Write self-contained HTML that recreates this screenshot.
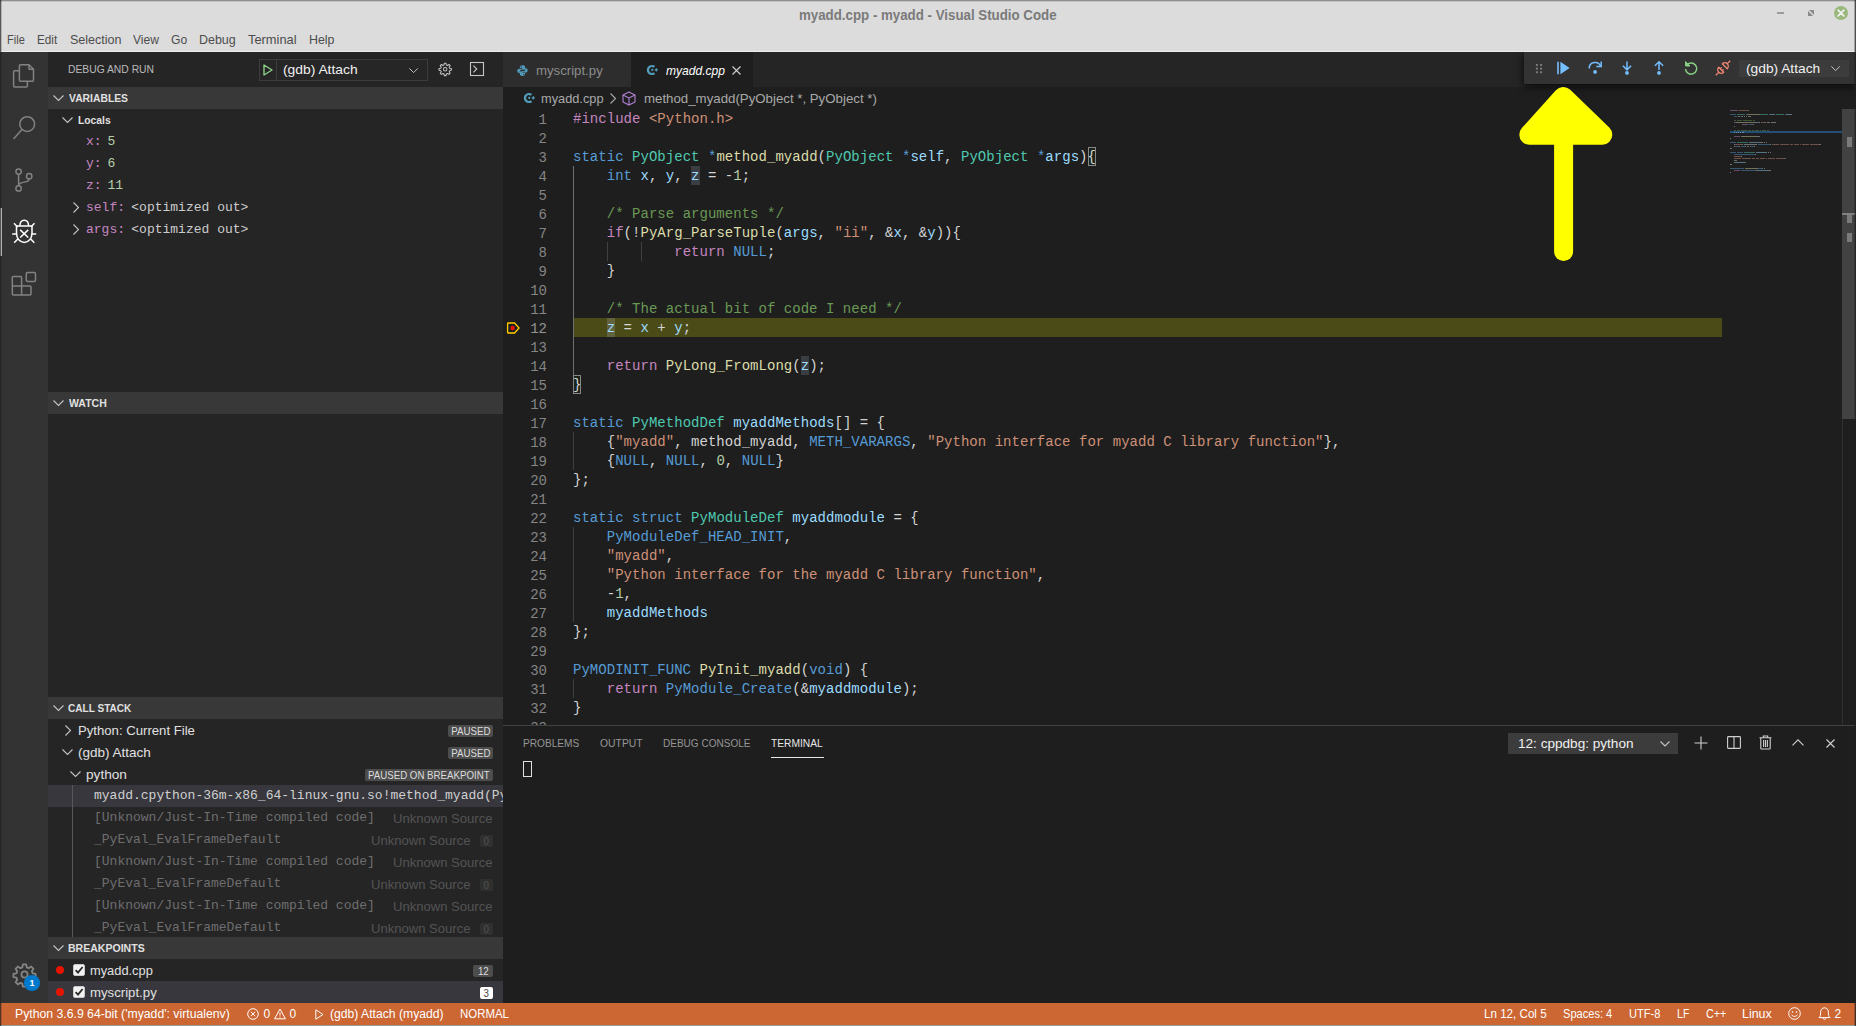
<!DOCTYPE html>
<html>
<head>
<meta charset="utf-8">
<title>myadd.cpp - myadd - Visual Studio Code</title>
<style>
*{box-sizing:border-box;margin:0;padding:0}
html,body{width:1856px;height:1026px;overflow:hidden;background:#1e1e1e}
body{position:relative;font-family:"Liberation Sans",sans-serif;font-size:13px;color:#cccccc}
.abs{position:absolute}
.t{position:absolute;white-space:pre;line-height:1}
svg{position:absolute;overflow:visible}
/* ---------- title + menu ---------- */
#titlebar{left:0;top:0;width:1856px;height:52px;background:#dcdcdc}
.tt{font-weight:bold;font-size:15.2px;color:#7a7a7a}
.menu{top:33.4px;font-size:13px;color:#4d4d4d}
/* ---------- activity bar ---------- */
#activity{left:0;top:52px;width:48px;height:951px;background:#333333}
/* ---------- sidebar ---------- */
#sidebar{left:48px;top:52px;width:455px;height:951px;background:#252526}
.hdr{left:48px;width:455px;height:22px;background:#383838}
.hdrt{font-size:11px;font-weight:bold;color:#e0e0e0;left:68px}
.mono{font-family:"Liberation Mono",monospace}

.chev{fill:none;stroke:#c5c5c5;stroke-width:1.1}
.row{font-size:13px;color:#e0e0e0}
.m13{font-family:"Liberation Mono",monospace;font-size:13px}
.badge{position:absolute;height:12px;border-radius:2px;background:#4d4d4d;color:#dcdcdc;font-size:11.3px;line-height:12.6px;white-space:pre;display:flex;justify-content:center}
.badge span{display:block;transform:scaleX(.86);transform-origin:50% 50%}
.dis{color:#6e6e6e}
.src{font-size:12px;color:#545454}
/* ---------- editor ---------- */
#tabs{left:503px;top:52px;width:1353px;height:35px;background:#252526}
#editor{left:503px;top:87px;width:1353px;height:638px;background:#1e1e1e}

.code{position:absolute;left:573px;white-space:pre;font-family:"Liberation Mono",monospace;font-size:14px;line-height:21px;height:19px;color:#d4d4d4;letter-spacing:0.031px}
.ln{position:absolute;left:503px;margin-top:2px;width:44px;text-align:right;white-space:pre;font-family:"Liberation Mono",monospace;font-size:14px;line-height:19px;height:19px;color:#858585}
.k{color:#569cd6}.c{color:#c586c0}.ty{color:#4ec9b0}.f{color:#dcdcaa}.v{color:#9cdcfe}.s{color:#ce9178}.n{color:#b5cea8}.cm{color:#6a9955}
.ig{position:absolute;width:1px;background:#404040}
.bm{display:inline-block;height:19px;vertical-align:top;outline:1px solid #888888;outline-offset:-1px;background:rgba(0,100,0,0.1)}
.wh{display:inline-block;height:19px;vertical-align:top;background:#3a3d41;color:#9cdcfe}
.whs{display:inline-block;height:19px;vertical-align:top;background:#62623c;color:#9cdcfe}
.bc{top:92px;font-size:13px;color:#a9a9a9}
.pt{top:738px;font-size:11px;color:#969696}
/* ---------- status ---------- */
#status{left:0;top:1003px;width:1856px;height:22px;background:#cc6633}
.st{top:1008px;font-size:12px;color:#ffffff}
</style>
</head>
<body>
<!-- TITLE BAR -->
<div id="titlebar" class="abs"></div>
<div class="abs" style="left:0;top:0;width:1856px;height:1px;background:#8e8e8e"></div>
<div class="abs" style="left:0;top:1px;width:1856px;height:1px;background:#c4c4c4"></div>
<div class="abs" style="left:0;top:51px;width:1856px;height:1px;background:#ececec"></div>
<div class="t tt" style="transform:scaleX(0.8755);transform-origin:0 0;margin-left:0.26px;left:798.5px;top:7px">myadd.cpp - myadd - Visual Studio Code</div>
<div class="t menu" style="transform:scaleX(0.8476);transform-origin:0 0;margin-left:-0.40px;left:7px">File</div>
<div class="t menu" style="transform:scaleX(0.9000);transform-origin:0 0;margin-left:0.40px;left:37px">Edit</div>
<div class="t menu" style="transform:scaleX(0.9642);transform-origin:0 0;margin-left:0.20px;left:70px">Selection</div>
<div class="t menu" style="transform:scaleX(0.9286);transform-origin:0 0;margin-left:0.00px;left:133px">View</div>
<div class="t menu" style="transform:scaleX(0.9294);transform-origin:0 0;margin-left:0.30px;left:171px">Go</div>
<div class="t menu" style="transform:scaleX(0.9579);transform-origin:0 0;margin-left:0.40px;left:199px">Debug</div>
<div class="t menu" style="transform:scaleX(0.9878);transform-origin:0 0;margin-left:0.20px;left:248px">Terminal</div>
<div class="t menu" style="transform:scaleX(0.9519);transform-origin:0 0;margin-left:0.30px;left:309px">Help</div>
<!-- window buttons -->
<div class="abs" style="left:1777px;top:12px;width:7px;height:2px;background:#9b9b9b"></div>
<svg style="left:1806px;top:8px" width="10" height="10" viewBox="0 0 10 10"><path d="M3 2 L8 2 L8 7 Z" fill="#8a8a8a"/><path d="M2 3 L2 8 L7 8 Z" fill="#8a8a8a"/></svg>
<div class="abs" style="left:1834px;top:6px;width:14px;height:14px;border-radius:7px;background:#9ab87c"></div>
<svg style="left:1834px;top:6px" width="14" height="14" viewBox="0 0 14 14"><path d="M4.2 4.2 L9.8 9.8 M9.8 4.2 L4.2 9.8" stroke="#f0f0f0" stroke-width="1.8" stroke-linecap="round"/></svg>

<!-- ACTIVITY BAR -->
<div id="activity" class="abs"></div>
<div class="abs" style="left:0;top:208px;width:2px;height:48px;background:#d8d8d8"></div>
<!-- explorer -->
<svg style="left:12px;top:64px" width="24" height="24" viewBox="0 0 24 24" fill="none" stroke="#828282" stroke-width="1.5" stroke-linejoin="round"><path d="M8.4 0.8 H17 L21.5 5.3 V16.3 a1 1 0 0 1 -1 1 H8.4 a1 1 0 0 1 -1 -1 V1.8 a1 1 0 0 1 1 -1 Z"/><path d="M17 0.8 V5.3 H21.5"/><path d="M7.4 6.7 H2.6 a1 1 0 0 0 -1 1 V22.1 a1 1 0 0 0 1 1 H14.4 a1 1 0 0 0 1 -1 V17.3"/></svg>
<!-- search -->
<svg style="left:12px;top:116px" width="24" height="24" viewBox="0 0 24 24" fill="none" stroke="#828282" stroke-width="1.5"><circle cx="15.2" cy="8.1" r="7.4"/><path d="M10 13.4 L1.5 23.1"/></svg>
<!-- scm -->
<svg style="left:12px;top:168px" width="24" height="24" viewBox="0 0 24 24" fill="none" stroke="#828282" stroke-width="1.5"><circle cx="6.6" cy="3.6" r="2.7"/><circle cx="6.6" cy="20.4" r="2.7"/><circle cx="17.2" cy="8.3" r="2.7"/><path d="M6.6 6.3 V17.7 M17.2 11 C17.2 15.6 6.6 12.6 6.6 17.7"/></svg>
<!-- debug -->
<svg style="left:12px;top:219px" width="24" height="26" viewBox="0 0 24 26" fill="none" stroke="#ffffff" stroke-width="1.5"><path d="M4.5 7 H20 V14 C20 19.6 16.5 23.5 12.25 23.5 C8 23.5 4.5 19.6 4.5 14 Z" stroke-linejoin="round"/><path d="M7.9 7 C7.9 3 9.6 1.2 12.25 1.2 C14.9 1.2 16.6 3 16.6 7"/><path d="M0.2 14.9 H4.5 M20 14.9 H24.2 M2 4.2 L5.6 8 M22.5 4.2 L18.9 8 M2.2 23.8 L6 19.8 M22.3 23.8 L18.5 19.8"/><path d="M8.2 10.9 L16.2 18.5 M16.2 10.9 L8.2 18.5"/></svg>
<!-- extensions -->
<svg style="left:12px;top:272px" width="24" height="24" viewBox="0 0 24 24" fill="none" stroke="#828282" stroke-width="1.5" stroke-linejoin="round"><path d="M1.3 4.6 H8.6 a1 1 0 0 1 1 1 V14 H18 a1 1 0 0 1 1 1 V22.1 a1 1 0 0 1 -1 1 H1.3 a1 1 0 0 1 -1 -1 V5.6 a1 1 0 0 1 1 -1 Z M0.3 14 H9.6 V23.1"/><rect x="14.3" y="0.5" width="9.2" height="9" rx="1.2"/></svg>
<!-- gear -->
<svg style="left:11.5px;top:962.4px" width="27" height="27" viewBox="0 0 28 28" fill="none" stroke="#848484" stroke-width="1.9" stroke-linejoin="round"><circle cx="13" cy="13" r="3.2"/><path d="M11.3 2.5 h3.4 l.6 3 l2 .9 l2.6 -1.7 l2.4 2.4 l-1.7 2.6 l.9 2 l3 .6 v3.4 l-3 .6 l-.9 2 l1.7 2.6 l-2.4 2.4 l-2.6 -1.7 l-2 .9 l-.6 3 h-3.4 l-.6 -3 l-2 -.9 l-2.6 1.7 l-2.4 -2.4 l1.7 -2.6 l-.9 -2 l-3 -.6 v-3.4 l3 -.6 l.9 -2 l-1.7 -2.6 l2.4 -2.4 l2.6 1.7 l2 -.9 Z"/></svg>
<div class="abs" style="left:24px;top:975px;width:16px;height:16px;border-radius:8px;background:#007acc"></div>
<div class="t" style="left:24px;top:979px;width:16px;text-align:center;font-size:9px;font-weight:bold;color:#fff">1</div>

<!-- SIDEBAR -->
<div id="sidebar" class="abs"></div>
<div class="t" style="transform:scaleX(0.9380);transform-origin:0 0;margin-left:0.30px;left:68px;top:64px;font-size:11px;color:#bbbbbb">DEBUG AND RUN</div>
<div class="abs" style="left:259px;top:59px;width:169px;height:22px;border:1px solid #3c3c3c;background:#262627"></div>
<div class="abs" style="left:276px;top:60px;width:1px;height:20px;background:#3c3c3c"></div>
<svg style="left:263px;top:64px" width="10" height="12" viewBox="0 0 10 12"><path d="M1 1 L9 6 L1 11 Z" fill="none" stroke="#89d185" stroke-width="1.4" stroke-linejoin="round"/></svg>
<div class="t" style="transform:scaleX(1.0643);transform-origin:0 0;margin-left:0.00px;left:283px;top:63px;font-size:13px;color:#f0f0f0">(gdb) Attach</div>
<svg style="left:408.9px;top:67.8px" width="9.2" height="5.2" viewBox="0 0 9.2 5.2"><path class="chev" style="stroke-width:1" d="M0.4 0.4 L4.6 4.6 L8.8 0.4"/></svg>
<svg style="left:437.8px;top:61.8px" width="14.4" height="14.4" viewBox="0 0 28 28" fill="none" stroke="#c5c5c5" stroke-width="2" stroke-linejoin="round"><circle cx="14" cy="14" r="3.4"/><path d="M12.3 2.5 h3.4 l.6 3.4 l2.2 .9 l2.8 -2 l2.4 2.4 l-2 2.8 l.9 2.2 l3.4 .6 v3.4 l-3.4 .6 l-.9 2.2 l2 2.8 l-2.4 2.4 l-2.8 -2 l-2.2 .9 l-.6 3.4 h-3.4 l-.6 -3.4 l-2.2 -.9 l-2.8 2 l-2.4 -2.4 l2 -2.8 l-.9 -2.2 l-3.4 -.6 v-3.4 l3.4 -.6 l.9 -2.2 l-2 -2.8 l2.4 -2.4 l2.8 2 l2.2 -.9 Z"/></svg>
<svg style="left:470px;top:62px" width="14" height="14" viewBox="0 0 14 14" fill="none" stroke="#c5c5c5" stroke-width="1.1"><rect x="0.5" y="0.5" width="13" height="13"/><path d="M3.4 3.6 L6.8 7 L3.4 10.4"/></svg>
<div class="abs hdr" style="top:87px"></div>
<svg style="left:52.5px;top:95px" width="11" height="6" viewBox="0 0 11 6"><path class="chev" d="M0.5 0.5 L5.5 5.5 L10.5 0.5"/></svg>
<div class="t hdrt" style="transform:scaleX(0.9406);transform-origin:0 0;margin-left:1.24px;top:93px">VARIABLES</div>
<div class="abs hdr" style="top:392px"></div>
<svg style="left:52.5px;top:400px" width="11" height="6" viewBox="0 0 11 6"><path class="chev" d="M0.5 0.5 L5.5 5.5 L10.5 0.5"/></svg>
<div class="t hdrt" style="transform:scaleX(0.9550);transform-origin:0 0;margin-left:1.25px;top:398px">WATCH</div>
<div class="abs hdr" style="top:697px"></div>
<svg style="left:52.5px;top:705px" width="11" height="6" viewBox="0 0 11 6"><path class="chev" d="M0.5 0.5 L5.5 5.5 L10.5 0.5"/></svg>
<div class="t hdrt" style="transform:scaleX(0.9143);transform-origin:0 0;margin-left:0.30px;top:703px">CALL STACK</div>
<div class="abs hdr" style="top:937px"></div>
<svg style="left:52.5px;top:945px" width="11" height="6" viewBox="0 0 11 6"><path class="chev" d="M0.5 0.5 L5.5 5.5 L10.5 0.5"/></svg>
<div class="t hdrt" style="transform:scaleX(0.9575);transform-origin:0 0;margin-left:0.40px;top:943px">BREAKPOINTS</div>
<svg style="left:62.0px;top:117px" width="11" height="6" viewBox="0 0 11 6"><path class="chev" d="M0.5 0.5 L5.5 5.5 L10.5 0.5"/></svg>
<div class="t" style="transform:scaleX(0.9371);transform-origin:0 0;margin-left:0.20px;left:78px;top:115px;font-size:11px;font-weight:bold;color:#e0e0e0">Locals</div>
<div class="t m13" style="left:86px;top:135px"><span style="color:#c586c0">x:</span><span style="color:#b5cea8;margin-left:5.8px">5</span></div>
<div class="t m13" style="left:86px;top:157px"><span style="color:#c586c0">y:</span><span style="color:#b5cea8;margin-left:5.8px">6</span></div>
<div class="t m13" style="left:86px;top:179px"><span style="color:#c586c0">z:</span><span style="color:#b5cea8;margin-left:5.8px">11</span></div>
<svg style="left:72.5px;top:201.5px" width="6" height="11" viewBox="0 0 6 11"><path class="chev" d="M0.5 0.5 L5.5 5.5 L0.5 10.5"/></svg>
<div class="t m13" style="left:86px;top:201px"><span style="color:#c586c0">self:</span><span style="color:#cccccc;margin-left:6.3px">&lt;optimized out&gt;</span></div>
<svg style="left:72.5px;top:223.5px" width="6" height="11" viewBox="0 0 6 11"><path class="chev" d="M0.5 0.5 L5.5 5.5 L0.5 10.5"/></svg>
<div class="t m13" style="left:86px;top:223px"><span style="color:#c586c0">args:</span><span style="color:#cccccc;margin-left:6.3px">&lt;optimized out&gt;</span></div>
<svg style="left:64.5px;top:724.5px" width="6" height="11" viewBox="0 0 6 11"><path class="chev" d="M0.5 0.5 L5.5 5.5 L0.5 10.5"/></svg>
<div class="t row" style="transform:scaleX(1.0112);transform-origin:0 0;margin-left:0.20px;left:78px;top:724px">Python: Current File</div>
<div class="badge" style="left:448px;top:725px;width:45px"><span>PAUSED</span></div>
<svg style="left:62.0px;top:749px" width="11" height="6" viewBox="0 0 11 6"><path class="chev" d="M0.5 0.5 L5.5 5.5 L10.5 0.5"/></svg>
<div class="t row" style="transform:scaleX(1.0386);transform-origin:0 0;margin-left:0.20px;left:78px;top:746px">(gdb) Attach</div>
<div class="badge" style="left:448px;top:747px;width:45px"><span>PAUSED</span></div>
<svg style="left:69.5px;top:771px" width="11" height="6" viewBox="0 0 11 6"><path class="chev" d="M0.5 0.5 L5.5 5.5 L10.5 0.5"/></svg>
<div class="t row" style="transform:scaleX(1.0487);transform-origin:0 0;margin-left:0.40px;left:86px;top:768px">python</div>
<div class="badge" style="left:365px;top:769px;width:128px"><span>PAUSED ON BREAKPOINT</span></div>
<div class="abs" style="left:48px;top:785px;width:455px;height:22px;background:#37373d"></div>
<div class="abs" style="left:72px;top:785px;width:1px;height:152px;background:#585858"></div>
<div class="abs" style="left:94px;top:785px;width:409px;height:22px;overflow:hidden"><div class="t m13" style="left:0;top:4px;color:#d0d0d0">myadd.cpython-36m-x86_64-linux-gnu.so!method_myadd(PyObject * self, PyObject * args)</div></div>
<div class="t m13 dis" style="left:94px;top:811px">[Unknown/Just-In-Time compiled code]</div>
<div class="t src" style="transform:scaleX(1.0889);transform-origin:0 0;margin-left:-1.09px;left:394px;top:813px">Unknown Source</div>
<div class="t m13 dis" style="left:94px;top:833px">_PyEval_EvalFrameDefault</div>
<div class="t src" style="transform:scaleX(1.0889);transform-origin:0 0;margin-left:-1.09px;left:372px;top:835px">Unknown Source</div>
<div class="badge" style="left:480px;top:835px;width:13px;background:#303030;color:#525252"><span>0</span></div>
<div class="t m13 dis" style="left:94px;top:855px">[Unknown/Just-In-Time compiled code]</div>
<div class="t src" style="transform:scaleX(1.0889);transform-origin:0 0;margin-left:-1.09px;left:394px;top:857px">Unknown Source</div>
<div class="t m13 dis" style="left:94px;top:877px">_PyEval_EvalFrameDefault</div>
<div class="t src" style="transform:scaleX(1.0889);transform-origin:0 0;margin-left:-1.09px;left:372px;top:879px">Unknown Source</div>
<div class="badge" style="left:480px;top:879px;width:13px;background:#303030;color:#525252"><span>0</span></div>
<div class="t m13 dis" style="left:94px;top:899px">[Unknown/Just-In-Time compiled code]</div>
<div class="t src" style="transform:scaleX(1.0889);transform-origin:0 0;margin-left:-1.09px;left:394px;top:901px">Unknown Source</div>
<div class="t m13 dis" style="left:94px;top:921px">_PyEval_EvalFrameDefault</div>
<div class="t src" style="transform:scaleX(1.0889);transform-origin:0 0;margin-left:-1.09px;left:372px;top:923px">Unknown Source</div>
<div class="badge" style="left:480px;top:923px;width:13px;background:#303030;color:#525252"><span>0</span></div>
<div class="abs" style="left:48px;top:981px;width:455px;height:22px;background:#37373d"></div>
<div class="abs" style="left:55.8px;top:965.9px;width:8.2px;height:8.2px;border-radius:5px;background:#e51400"></div>
<div class="abs" style="left:73px;top:964px;width:12px;height:12px;border-radius:2px;background:#f2f2f2;border:1px solid #c8c8c8"></div>
<svg style="left:73px;top:964px" width="12" height="12" viewBox="0 0 12 12"><path d="M2.6 6.2 L5 8.6 L9.6 3" fill="none" stroke="#2a2a2a" stroke-width="1.8"/></svg>
<div class="t row" style="transform:scaleX(0.9875);transform-origin:0 0;margin-left:0.50px;left:89px;top:964px">myadd.cpp</div>
<div class="abs" style="left:55.8px;top:987.9px;width:8.2px;height:8.2px;border-radius:5px;background:#e51400"></div>
<div class="abs" style="left:73px;top:986px;width:12px;height:12px;border-radius:2px;background:#f2f2f2;border:1px solid #c8c8c8"></div>
<svg style="left:73px;top:986px" width="12" height="12" viewBox="0 0 12 12"><path d="M2.6 6.2 L5 8.6 L9.6 3" fill="none" stroke="#2a2a2a" stroke-width="1.8"/></svg>
<div class="t row" style="transform:scaleX(1.0152);transform-origin:0 0;margin-left:0.50px;left:89px;top:986px">myscript.py</div>
<div class="badge" style="left:473px;top:965px;width:20px"><span>12</span></div>
<div class="badge" style="left:479.5px;top:987px;width:13.5px;background:#ffffff;color:#444"><span>3</span></div>

<!-- EDITOR -->
<div id="tabs" class="abs"></div>
<div id="editor" class="abs"></div>
<div class="abs" style="left:503px;top:52px;width:128px;height:35px;background:#2d2d2d"></div>
<div class="abs" style="left:631px;top:52px;width:122px;height:35px;background:#1e1e1e"></div>
<!-- python icon -->
<svg style="left:517.3px;top:64.9px" width="10.9" height="11.2" viewBox="0 0 12 12" preserveAspectRatio="none"><path d="M5.9 0.3 C3.6 0.3 3.2 1.2 3.2 2 V3.3 H6.1 V3.9 H2.2 C1 3.9 0.3 4.9 0.3 6.2 C0.3 7.6 1 8.5 2.1 8.5 H3.1 V7 C3.1 5.9 4 5.2 5 5.2 H7.6 C8.4 5.2 8.9 4.6 8.9 3.9 V2 C8.9 1 8 0.3 5.9 0.3 Z" fill="#519aba"/><path d="M6.1 11.7 C8.4 11.7 8.8 10.8 8.8 10 V8.7 H5.9 V8.1 H9.8 C11 8.1 11.7 7.1 11.7 5.8 C11.7 4.4 11 3.5 9.9 3.5 H8.9 V5 C8.9 6.1 8 6.8 7 6.8 H4.4 C3.6 6.8 3.1 7.4 3.1 8.1 V10 C3.1 11 4 11.7 6.1 11.7 Z" fill="#519aba"/><circle cx="4.6" cy="1.8" r=".6" fill="#2d2d2d"/><circle cx="7.4" cy="10.2" r=".6" fill="#2d2d2d"/></svg>
<div class="t" style="transform:scaleX(1.0152);transform-origin:0 0;margin-left:0.60px;left:535px;top:64px;font-size:13px;color:#8c8c8c">myscript.py</div>
<!-- cpp icon -->
<svg style="left:646px;top:65px" width="13" height="12" viewBox="0 0 13 12"><path d="M8.44 1.97 A3.95 3.95 0 1 0 8.44 8.03" fill="none" stroke="#519aba" stroke-width="2.3"/><path d="M5.2 4.8 H7.4 M6.3 3.7 V5.9 M8.7 4.8 H11.9 M10.3 3.2 V6.4" stroke="#519aba" stroke-width="1.3"/></svg>
<div class="t" style="transform:scaleX(0.9277);transform-origin:0 0;margin-left:1.83px;left:664px;top:64px;font-size:13px;font-style:italic;color:#ffffff">myadd.cpp</div>
<svg style="left:732px;top:66px" width="9" height="9" viewBox="0 0 9 9"><path d="M0.5 0.5 L8.5 8.5 M8.5 0.5 L0.5 8.5" stroke="#d0d0d0" stroke-width="1.1"/></svg>
<!-- breadcrumbs -->
<svg style="left:522.9px;top:93.3px" width="13" height="12" viewBox="0 0 13 12"><path d="M8.44 1.97 A3.95 3.95 0 1 0 8.44 8.03" fill="none" stroke="#519aba" stroke-width="2.3"/><path d="M5.2 4.8 H7.4 M6.3 3.7 V5.9 M8.7 4.8 H11.9 M10.3 3.2 V6.4" stroke="#519aba" stroke-width="1.3"/></svg>
<div class="t bc" style="transform:scaleX(0.9828);transform-origin:0 0;margin-left:0.40px;left:541px">myadd.cpp</div>
<svg style="left:610px;top:93px" width="6" height="11" viewBox="0 0 6 11"><path d="M0.5 0.5 L5.5 5.5 L0.5 10.5" fill="none" stroke="#a9a9a9" stroke-width="1.1"/></svg>
<svg style="left:622px;top:91px" width="14" height="15" viewBox="0 0 14 15" fill="none" stroke="#b180d7" stroke-width="1.1" stroke-linejoin="round"><path d="M7 1 L13 4 V11 L7 14 L1 11 V4 Z M1 4 L7 7 L13 4 M7 7 V14"/></svg>
<div class="t bc" style="transform:scaleX(1.0197);transform-origin:0 0;margin-left:0.50px;left:643px">method_myadd(PyObject *, PyObject *)</div>

<div class="abs" style="left:503px;top:109px;width:1353px;height:616px;overflow:hidden">
<div class="abs" style="left:-503px;top:-109px;width:1856px;height:800px">
<div class="abs" style="left:573px;top:318px;width:1149px;height:19px;background:#4b4b18"></div>
<div class="ig" style="left:573px;top:166px;height:209px;background:#707070"></div>
<div class="ig" style="left:607px;top:242px;height:19px;background:#404040"></div>
<div class="ig" style="left:641px;top:242px;height:19px;background:#404040"></div>
<div class="ig" style="left:573px;top:432px;height:38px;background:#404040"></div>
<div class="ig" style="left:573px;top:527px;height:95px;background:#404040"></div>
<div class="ig" style="left:573px;top:679px;height:19px;background:#404040"></div>
<div class="ln" style="top:109px">1</div><div class="code" style="top:109px"><span class="c">#include</span> <span class="s">&lt;Python.h&gt;</span></div>
<div class="ln" style="top:128px">2</div>
<div class="ln" style="top:147px">3</div><div class="code" style="top:147px"><span class="k">static</span> <span class="ty">PyObject</span> <span class="k">*</span><span class="f">method_myadd</span>(<span class="ty">PyObject</span> <span class="k">*</span><span class="v">self</span>, <span class="ty">PyObject</span> <span class="k">*</span><span class="v">args</span>)<span class="bm">{</span></div>
<div class="ln" style="top:166px">4</div><div class="code" style="top:166px">    <span class="k">int</span> <span class="v">x</span>, <span class="v">y</span>, <span class="wh">z</span> = -<span class="n">1</span>;</div>
<div class="ln" style="top:185px">5</div>
<div class="ln" style="top:204px">6</div><div class="code" style="top:204px">    <span class="cm">/* Parse arguments */</span></div>
<div class="ln" style="top:223px">7</div><div class="code" style="top:223px">    <span class="c">if</span>(!<span class="f">PyArg_ParseTuple</span>(<span class="v">args</span>, <span class="s">&quot;ii&quot;</span>, &amp;<span class="v">x</span>, &amp;<span class="v">y</span>)){</div>
<div class="ln" style="top:242px">8</div><div class="code" style="top:242px">            <span class="c">return</span> <span class="k">NULL</span>;</div>
<div class="ln" style="top:261px">9</div><div class="code" style="top:261px">    }</div>
<div class="ln" style="top:280px">10</div>
<div class="ln" style="top:299px">11</div><div class="code" style="top:299px">    <span class="cm">/* The actual bit of code I need */</span></div>
<div class="ln" style="top:318px;color:#959595">12</div><div class="code" style="top:318px">    <span class="whs">z</span> = <span class="v">x</span> + <span class="v">y</span>;</div>
<div class="ln" style="top:337px">13</div>
<div class="ln" style="top:356px">14</div><div class="code" style="top:356px">    <span class="c">return</span> <span class="f">PyLong_FromLong</span>(<span class="wh">z</span>);</div>
<div class="ln" style="top:375px">15</div><div class="code" style="top:375px"><span class="bm">}</span></div>
<div class="ln" style="top:394px">16</div>
<div class="ln" style="top:413px">17</div><div class="code" style="top:413px"><span class="k">static</span> <span class="ty">PyMethodDef</span> <span class="v">myaddMethods</span>[] = {</div>
<div class="ln" style="top:432px">18</div><div class="code" style="top:432px">    {<span class="s">&quot;myadd&quot;</span>, method_myadd, <span class="k">METH_VARARGS</span>, <span class="s">&quot;Python interface for myadd C library function&quot;</span>},</div>
<div class="ln" style="top:451px">19</div><div class="code" style="top:451px">    {<span class="k">NULL</span>, <span class="k">NULL</span>, <span class="n">0</span>, <span class="k">NULL</span>}</div>
<div class="ln" style="top:470px">20</div><div class="code" style="top:470px">};</div>
<div class="ln" style="top:489px">21</div>
<div class="ln" style="top:508px">22</div><div class="code" style="top:508px"><span class="k">static</span> <span class="k">struct</span> <span class="ty">PyModuleDef</span> <span class="v">myaddmodule</span> = {</div>
<div class="ln" style="top:527px">23</div><div class="code" style="top:527px">    <span class="k">PyModuleDef_HEAD_INIT</span>,</div>
<div class="ln" style="top:546px">24</div><div class="code" style="top:546px">    <span class="s">&quot;myadd&quot;</span>,</div>
<div class="ln" style="top:565px">25</div><div class="code" style="top:565px">    <span class="s">&quot;Python interface for the myadd C library function&quot;</span>,</div>
<div class="ln" style="top:584px">26</div><div class="code" style="top:584px">    -<span class="n">1</span>,</div>
<div class="ln" style="top:603px">27</div><div class="code" style="top:603px">    <span class="v">myaddMethods</span></div>
<div class="ln" style="top:622px">28</div><div class="code" style="top:622px">};</div>
<div class="ln" style="top:641px">29</div>
<div class="ln" style="top:660px">30</div><div class="code" style="top:660px"><span class="k">PyMODINIT_FUNC</span> <span class="f">PyInit_myadd</span>(<span class="k">void</span>) {</div>
<div class="ln" style="top:679px">31</div><div class="code" style="top:679px">    <span class="c">return</span> <span class="k">PyModule_Create</span>(&amp;<span class="v">myaddmodule</span>);</div>
<div class="ln" style="top:698px">32</div><div class="code" style="top:698px">}</div>
<div class="ln" style="top:717px">33</div>
<svg style="left:507px;top:322px" width="13" height="12" viewBox="0 0 13 12"><path d="M1.2 1 H7.6 L12 6 L7.6 11 H1.2 A0.6 0.6 0 0 1 0.6 10.4 V1.6 A0.6 0.6 0 0 1 1.2 1 Z" fill="none" stroke="#ffcc00" stroke-width="1.3" stroke-linejoin="round"/><circle cx="5.6" cy="6" r="2.2" fill="#e51400"/></svg>
</div></div>

<svg style="left:1722px;top:109px" width="120" height="70" viewBox="0 0 120 70" shape-rendering="crispEdges">
<rect x="8" y="22.2" width="112" height="1.5" fill="#264f78"/>
<rect x="8" y="0.5" width="8" height="1.3" fill="#c586c0" opacity="0.45"/><rect x="17" y="0.5" width="10" height="1.3" fill="#ce9178" opacity="0.45"/>
<rect x="8" y="4.5" width="6" height="1.3" fill="#569cd6" opacity="0.45"/><rect x="15" y="4.5" width="8" height="1.3" fill="#4ec9b0" opacity="0.45"/><rect x="24" y="4.5" width="1" height="1.3" fill="#569cd6" opacity="0.45"/><rect x="25" y="4.5" width="12" height="1.3" fill="#dcdcaa" opacity="0.45"/><rect x="37" y="4.5" width="1" height="1.3" fill="#d4d4d4" opacity="0.45"/><rect x="38" y="4.5" width="8" height="1.3" fill="#4ec9b0" opacity="0.45"/><rect x="47" y="4.5" width="1" height="1.3" fill="#569cd6" opacity="0.45"/><rect x="48" y="4.5" width="4" height="1.3" fill="#9cdcfe" opacity="0.45"/><rect x="52" y="4.5" width="1" height="1.3" fill="#d4d4d4" opacity="0.45"/><rect x="54" y="4.5" width="8" height="1.3" fill="#4ec9b0" opacity="0.45"/><rect x="63" y="4.5" width="1" height="1.3" fill="#569cd6" opacity="0.45"/><rect x="64" y="4.5" width="4" height="1.3" fill="#9cdcfe" opacity="0.45"/><rect x="68" y="4.5" width="1" height="1.3" fill="#d4d4d4" opacity="0.45"/><rect x="69" y="4.5" width="1" height="1.3" fill="#d4d4d4" opacity="0.45"/>
<rect x="12" y="6.5" width="3" height="1.3" fill="#569cd6" opacity="0.45"/><rect x="16" y="6.5" width="2" height="1.3" fill="#d4d4d4" opacity="0.45"/><rect x="19" y="6.5" width="2" height="1.3" fill="#d4d4d4" opacity="0.45"/><rect x="22" y="6.5" width="1" height="1.3" fill="#d4d4d4" opacity="0.45"/><rect x="24" y="6.5" width="1" height="1.3" fill="#d4d4d4" opacity="0.45"/><rect x="26" y="6.5" width="1" height="1.3" fill="#d4d4d4" opacity="0.45"/><rect x="27" y="6.5" width="1" height="1.3" fill="#b5cea8" opacity="0.45"/><rect x="28" y="6.5" width="1" height="1.3" fill="#d4d4d4" opacity="0.45"/>
<rect x="12" y="10.5" width="2" height="1.3" fill="#6a9955" opacity="0.45"/><rect x="15" y="10.5" width="5" height="1.3" fill="#6a9955" opacity="0.45"/><rect x="21" y="10.5" width="9" height="1.3" fill="#6a9955" opacity="0.45"/><rect x="31" y="10.5" width="2" height="1.3" fill="#6a9955" opacity="0.45"/>
<rect x="12" y="12.5" width="2" height="1.3" fill="#c586c0" opacity="0.45"/><rect x="14" y="12.5" width="2" height="1.3" fill="#d4d4d4" opacity="0.45"/><rect x="16" y="12.5" width="16" height="1.3" fill="#dcdcaa" opacity="0.45"/><rect x="32" y="12.5" width="1" height="1.3" fill="#d4d4d4" opacity="0.45"/><rect x="33" y="12.5" width="4" height="1.3" fill="#9cdcfe" opacity="0.45"/><rect x="37" y="12.5" width="1" height="1.3" fill="#d4d4d4" opacity="0.45"/><rect x="39" y="12.5" width="4" height="1.3" fill="#ce9178" opacity="0.45"/><rect x="43" y="12.5" width="1" height="1.3" fill="#d4d4d4" opacity="0.45"/><rect x="45" y="12.5" width="3" height="1.3" fill="#d4d4d4" opacity="0.45"/><rect x="49" y="12.5" width="5" height="1.3" fill="#d4d4d4" opacity="0.45"/>
<rect x="20" y="14.5" width="6" height="1.3" fill="#c586c0" opacity="0.45"/><rect x="27" y="14.5" width="4" height="1.3" fill="#569cd6" opacity="0.45"/><rect x="31" y="14.5" width="1" height="1.3" fill="#d4d4d4" opacity="0.45"/>
<rect x="12" y="16.5" width="1" height="1.3" fill="#d4d4d4" opacity="0.45"/>
<rect x="12" y="20.5" width="2" height="1.3" fill="#6a9955" opacity="0.45"/><rect x="15" y="20.5" width="3" height="1.3" fill="#6a9955" opacity="0.45"/><rect x="19" y="20.5" width="6" height="1.3" fill="#6a9955" opacity="0.45"/><rect x="26" y="20.5" width="3" height="1.3" fill="#6a9955" opacity="0.45"/><rect x="30" y="20.5" width="2" height="1.3" fill="#6a9955" opacity="0.45"/><rect x="33" y="20.5" width="4" height="1.3" fill="#6a9955" opacity="0.45"/><rect x="38" y="20.5" width="1" height="1.3" fill="#6a9955" opacity="0.45"/><rect x="40" y="20.5" width="4" height="1.3" fill="#6a9955" opacity="0.45"/><rect x="45" y="20.5" width="2" height="1.3" fill="#6a9955" opacity="0.45"/>
<rect x="12" y="22.5" width="1" height="1.3" fill="#d4d4d4" opacity="0.45"/><rect x="14" y="22.5" width="1" height="1.3" fill="#d4d4d4" opacity="0.45"/><rect x="16" y="22.5" width="1" height="1.3" fill="#d4d4d4" opacity="0.45"/><rect x="18" y="22.5" width="1" height="1.3" fill="#d4d4d4" opacity="0.45"/><rect x="20" y="22.5" width="2" height="1.3" fill="#d4d4d4" opacity="0.45"/>
<rect x="12" y="26.5" width="6" height="1.3" fill="#c586c0" opacity="0.45"/><rect x="19" y="26.5" width="15" height="1.3" fill="#dcdcaa" opacity="0.45"/><rect x="34" y="26.5" width="1" height="1.3" fill="#d4d4d4" opacity="0.45"/><rect x="35" y="26.5" width="1" height="1.3" fill="#d4d4d4" opacity="0.45"/><rect x="36" y="26.5" width="2" height="1.3" fill="#d4d4d4" opacity="0.45"/>
<rect x="8" y="28.5" width="1" height="1.3" fill="#d4d4d4" opacity="0.45"/>
<rect x="8" y="32.5" width="6" height="1.3" fill="#569cd6" opacity="0.45"/><rect x="15" y="32.5" width="11" height="1.3" fill="#4ec9b0" opacity="0.45"/><rect x="27" y="32.5" width="12" height="1.3" fill="#9cdcfe" opacity="0.45"/><rect x="39" y="32.5" width="2" height="1.3" fill="#d4d4d4" opacity="0.45"/><rect x="42" y="32.5" width="1" height="1.3" fill="#d4d4d4" opacity="0.45"/><rect x="44" y="32.5" width="1" height="1.3" fill="#d4d4d4" opacity="0.45"/>
<rect x="12" y="34.5" width="1" height="1.3" fill="#d4d4d4" opacity="0.45"/><rect x="13" y="34.5" width="7" height="1.3" fill="#ce9178" opacity="0.45"/><rect x="20" y="34.5" width="1" height="1.3" fill="#d4d4d4" opacity="0.45"/><rect x="22" y="34.5" width="13" height="1.3" fill="#d4d4d4" opacity="0.45"/><rect x="36" y="34.5" width="12" height="1.3" fill="#569cd6" opacity="0.45"/><rect x="48" y="34.5" width="1" height="1.3" fill="#d4d4d4" opacity="0.45"/><rect x="50" y="34.5" width="7" height="1.3" fill="#ce9178" opacity="0.45"/><rect x="58" y="34.5" width="9" height="1.3" fill="#ce9178" opacity="0.45"/><rect x="68" y="34.5" width="3" height="1.3" fill="#ce9178" opacity="0.45"/><rect x="72" y="34.5" width="5" height="1.3" fill="#ce9178" opacity="0.45"/><rect x="78" y="34.5" width="1" height="1.3" fill="#ce9178" opacity="0.45"/><rect x="80" y="34.5" width="7" height="1.3" fill="#ce9178" opacity="0.45"/><rect x="88" y="34.5" width="9" height="1.3" fill="#ce9178" opacity="0.45"/><rect x="97" y="34.5" width="2" height="1.3" fill="#d4d4d4" opacity="0.45"/>
<rect x="12" y="36.5" width="1" height="1.3" fill="#d4d4d4" opacity="0.45"/><rect x="13" y="36.5" width="4" height="1.3" fill="#569cd6" opacity="0.45"/><rect x="17" y="36.5" width="1" height="1.3" fill="#d4d4d4" opacity="0.45"/><rect x="19" y="36.5" width="4" height="1.3" fill="#569cd6" opacity="0.45"/><rect x="23" y="36.5" width="1" height="1.3" fill="#d4d4d4" opacity="0.45"/><rect x="25" y="36.5" width="1" height="1.3" fill="#b5cea8" opacity="0.45"/><rect x="26" y="36.5" width="1" height="1.3" fill="#d4d4d4" opacity="0.45"/><rect x="28" y="36.5" width="4" height="1.3" fill="#569cd6" opacity="0.45"/><rect x="32" y="36.5" width="1" height="1.3" fill="#d4d4d4" opacity="0.45"/>
<rect x="8" y="38.5" width="2" height="1.3" fill="#d4d4d4" opacity="0.45"/>
<rect x="8" y="42.5" width="6" height="1.3" fill="#569cd6" opacity="0.45"/><rect x="15" y="42.5" width="6" height="1.3" fill="#569cd6" opacity="0.45"/><rect x="22" y="42.5" width="11" height="1.3" fill="#4ec9b0" opacity="0.45"/><rect x="34" y="42.5" width="11" height="1.3" fill="#9cdcfe" opacity="0.45"/><rect x="46" y="42.5" width="1" height="1.3" fill="#d4d4d4" opacity="0.45"/><rect x="48" y="42.5" width="1" height="1.3" fill="#d4d4d4" opacity="0.45"/>
<rect x="12" y="44.5" width="21" height="1.3" fill="#569cd6" opacity="0.45"/><rect x="33" y="44.5" width="1" height="1.3" fill="#d4d4d4" opacity="0.45"/>
<rect x="12" y="46.5" width="7" height="1.3" fill="#ce9178" opacity="0.45"/><rect x="19" y="46.5" width="1" height="1.3" fill="#d4d4d4" opacity="0.45"/>
<rect x="12" y="48.5" width="7" height="1.3" fill="#ce9178" opacity="0.45"/><rect x="20" y="48.5" width="9" height="1.3" fill="#ce9178" opacity="0.45"/><rect x="30" y="48.5" width="3" height="1.3" fill="#ce9178" opacity="0.45"/><rect x="34" y="48.5" width="3" height="1.3" fill="#ce9178" opacity="0.45"/><rect x="38" y="48.5" width="5" height="1.3" fill="#ce9178" opacity="0.45"/><rect x="44" y="48.5" width="1" height="1.3" fill="#ce9178" opacity="0.45"/><rect x="46" y="48.5" width="7" height="1.3" fill="#ce9178" opacity="0.45"/><rect x="54" y="48.5" width="9" height="1.3" fill="#ce9178" opacity="0.45"/><rect x="63" y="48.5" width="1" height="1.3" fill="#d4d4d4" opacity="0.45"/>
<rect x="12" y="50.5" width="1" height="1.3" fill="#d4d4d4" opacity="0.45"/><rect x="13" y="50.5" width="1" height="1.3" fill="#b5cea8" opacity="0.45"/><rect x="14" y="50.5" width="1" height="1.3" fill="#d4d4d4" opacity="0.45"/>
<rect x="12" y="52.5" width="12" height="1.3" fill="#9cdcfe" opacity="0.45"/>
<rect x="8" y="54.5" width="2" height="1.3" fill="#d4d4d4" opacity="0.45"/>
<rect x="8" y="58.5" width="14" height="1.3" fill="#569cd6" opacity="0.45"/><rect x="23" y="58.5" width="12" height="1.3" fill="#dcdcaa" opacity="0.45"/><rect x="35" y="58.5" width="1" height="1.3" fill="#d4d4d4" opacity="0.45"/><rect x="36" y="58.5" width="4" height="1.3" fill="#569cd6" opacity="0.45"/><rect x="40" y="58.5" width="1" height="1.3" fill="#d4d4d4" opacity="0.45"/><rect x="42" y="58.5" width="1" height="1.3" fill="#d4d4d4" opacity="0.45"/>
<rect x="12" y="60.5" width="6" height="1.3" fill="#c586c0" opacity="0.45"/><rect x="19" y="60.5" width="15" height="1.3" fill="#569cd6" opacity="0.45"/><rect x="34" y="60.5" width="2" height="1.3" fill="#d4d4d4" opacity="0.45"/><rect x="36" y="60.5" width="11" height="1.3" fill="#9cdcfe" opacity="0.45"/><rect x="47" y="60.5" width="2" height="1.3" fill="#d4d4d4" opacity="0.45"/>
<rect x="8" y="62.5" width="1" height="1.3" fill="#d4d4d4" opacity="0.45"/>
</svg>
<div class="abs" style="left:1842px;top:109px;width:14px;height:310px;background:#424242"></div>
<div class="abs" style="left:1842px;top:419px;width:1px;height:306px;background:#303030"></div>
<div class="abs" style="left:1847px;top:137px;width:5px;height:10px;background:#7a7a7a"></div>
<div class="abs" style="left:1842px;top:213px;width:14px;height:2px;background:#808080"></div>
<div class="abs" style="left:1847px;top:215px;width:5px;height:8px;background:#7a7a7a"></div>
<div class="abs" style="left:1847px;top:233px;width:5px;height:9px;background:#7a7a7a"></div>

<div class="abs" style="left:503px;top:725px;width:1353px;height:278px;background:#1e1e1e"></div>
<div class="abs" style="left:503px;top:725px;width:1353px;height:1px;background:#414141"></div>
<div class="t pt" style="transform:scaleX(0.9197);transform-origin:0 0;margin-left:0.40px;left:523px">PROBLEMS</div>
<div class="t pt" style="transform:scaleX(0.9422);transform-origin:0 0;margin-left:-0.10px;left:600px">OUTPUT</div>
<div class="t pt" style="transform:scaleX(0.9115);transform-origin:0 0;margin-left:0.70px;left:662px">DEBUG CONSOLE</div>
<div class="t pt" style="transform:scaleX(0.9304);transform-origin:0 0;margin-left:0.20px;left:771px;color:#e7e7e7">TERMINAL</div>
<div class="abs" style="left:771px;top:757px;width:53px;height:1px;background:#e7e7e7"></div>
<div class="abs" style="left:522.5px;top:761px;width:9px;height:16px;border:1px solid #e0e0e0"></div>
<div class="abs" style="left:1508px;top:733px;width:170px;height:21px;background:#3c3c3c"></div>
<div class="t" style="transform:scaleX(1.0445);transform-origin:0 0;margin-left:0.50px;left:1517px;top:737px;font-size:13px;color:#f0f0f0">12: cppdbg: python</div>
<svg style="left:1659.5px;top:741px" width="10" height="6" viewBox="0 0 10 6"><path d="M0.5 0.5 L5 5 L9.5 0.5" fill="none" stroke="#c5c5c5" stroke-width="1.1"/></svg>
<svg style="left:1694px;top:736px" width="14" height="14" viewBox="0 0 14 14"><path d="M7 0.5 V13.5 M0.5 7 H13.5" stroke="#d0d0d0" stroke-width="1.1"/></svg>
<svg style="left:1727px;top:736px" width="14" height="13" viewBox="0 0 14 13" fill="none" stroke="#d0d0d0" stroke-width="1.1"><rect x="0.6" y="0.6" width="12.8" height="11.8" rx="0.8"/><path d="M7 0.6 V12.4"/></svg>
<svg style="left:1759px;top:735px" width="13" height="15" viewBox="0 0 13 15" fill="none" stroke="#d0d0d0" stroke-width="1.1"><path d="M0.5 2.8 H12.5 M4.3 2.8 V1 H8.7 V2.8 M1.8 2.8 V13.2 A0.8 0.8 0 0 0 2.6 14 H10.4 A0.8 0.8 0 0 0 11.2 13.2 V2.8 M4.6 5 V12 M6.5 5 V12 M8.4 5 V12"/></svg>
<svg style="left:1792px;top:739px" width="12" height="7" viewBox="0 0 12 7"><path d="M0.5 6.3 L6 0.8 L11.5 6.3" fill="none" stroke="#d0d0d0" stroke-width="1.1"/></svg>
<svg style="left:1826px;top:739px" width="9" height="9" viewBox="0 0 9 9"><path d="M0.5 0.5 L8.5 8.5 M8.5 0.5 L0.5 8.5" stroke="#d0d0d0" stroke-width="1.1"/></svg>

<div class="abs" style="left:1490px;top:52px;width:366px;height:60px;overflow:hidden"><div class="abs" style="left:34px;top:0;width:332px;height:32px;background:#333333;box-shadow:0 2px 8px rgba(0,0,0,0.85)"></div></div>
<svg style="left:1535px;top:62.6px" width="8" height="11" viewBox="0 0 8 11" fill="#7c7c7c"><rect x="0.9" y="1" width="2" height="1.9"/><rect x="5.1" y="1" width="2" height="1.9"/><rect x="0.9" y="4.65" width="2" height="1.9"/><rect x="5.1" y="4.65" width="2" height="1.9"/><rect x="0.9" y="8.3" width="2" height="1.9"/><rect x="5.1" y="8.3" width="2" height="1.9"/></svg>
<!-- continue -->
<svg style="left:1555px;top:60px" width="16" height="16" viewBox="0 0 16 16"><path d="M2.2 1.8 H3.8 V14.2 H2.2 Z M5.4 1.8 L14.6 8 L5.4 14.2 Z" fill="#75beff"/></svg>
<!-- step over -->
<svg style="left:1587px;top:60px" width="16" height="16" viewBox="0 0 16 16" fill="none" stroke="#75beff" stroke-width="1.5"><path d="M2.2 8.4 A5.9 5.9 0 0 1 13.6 6.2"/><path d="M14.2 1.6 V6.6 H9.4" stroke-linejoin="miter"/><circle cx="8.1" cy="11.9" r="1.9" fill="#75beff" stroke="none"/></svg>
<!-- step into -->
<svg style="left:1619px;top:60px" width="16" height="16" viewBox="0 0 16 16" fill="none" stroke="#75beff" stroke-width="1.5"><path d="M8 1.6 V9.6 M3.9 5.8 L8 9.9 L12.1 5.8"/><circle cx="8" cy="12.9" r="1.9" fill="#75beff" stroke="none"/></svg>
<!-- step out -->
<svg style="left:1651px;top:60px" width="16" height="16" viewBox="0 0 16 16" fill="none" stroke="#75beff" stroke-width="1.5"><path d="M8 10 V2 M3.9 5.8 L8 1.7 L12.1 5.8"/><circle cx="8" cy="12.9" r="1.9" fill="#75beff" stroke="none"/></svg>
<!-- restart -->
<svg style="left:1683px;top:60px" width="16" height="16" viewBox="0 0 16 16" fill="none" stroke="#89d185" stroke-width="1.5"><path d="M3.4 5.4 A5.6 5.6 0 1 1 2.5 9"/><path d="M2.6 1.6 V6 H7 Z" fill="#89d185" stroke-width="1" stroke-linejoin="round"/></svg>
<!-- disconnect -->
<svg style="left:1715px;top:60px" width="16" height="16" viewBox="0 0 16 16" fill="none" stroke="#f48771" stroke-width="1.3"><g transform="rotate(-45 8 8)"><path d="M-2.2 8 H2.2 M13.8 8 H18.2"/><path d="M5.5 4.5 V11.5 A3.5 3.5 0 0 1 5.5 4.5 Z" stroke-linejoin="round"/><path d="M5.5 6.6 H7.5 M5.5 9.4 H7.5"/><path d="M10.5 4.5 V11.5 A3.5 3.5 0 0 0 10.5 4.5 Z" stroke-linejoin="round"/></g></svg>
<div class="abs" style="left:1739px;top:60px;width:110px;height:17px;background:#3c3c3c"></div>
<div class="t" style="transform:scaleX(1.0586);transform-origin:0 0;margin-left:0.40px;left:1746px;top:62px;font-size:13px;color:#f0f0f0">(gdb) Attach</div>
<svg style="left:1831.3px;top:65.6px" width="9.2" height="5.2" viewBox="0 0 9.2 5.2"><path d="M0.4 0.4 L4.6 4.6 L8.8 0.4" fill="none" stroke="#c5c5c5" stroke-width="1"/></svg>

<svg style="left:0;top:0" width="1856" height="1026" viewBox="0 0 1856 1026"><path d="M1563.3 97 L1602.3 134.8 L1529.3 134.8 Z" fill="#ffff00" stroke="#ffff00" stroke-width="20" stroke-linejoin="round"/><path d="M1563.6 140 V251.5" stroke="#ffff00" stroke-width="19" stroke-linecap="round" fill="none"/></svg>

<!-- STATUS -->
<div id="status" class="abs"></div>
<div class="abs" style="left:0;top:1025px;width:1856px;height:1px;background:#9a9a9a"></div>
<div class="t st" style="transform:scaleX(1.0194);transform-origin:0 0;margin-left:0.20px;left:15px">Python 3.6.9 64-bit ('myadd': virtualenv)</div>
<svg style="left:247px;top:1008px" width="12" height="12" viewBox="0 0 12 12" fill="none" stroke="#ffffff" stroke-width="1"><circle cx="6" cy="6" r="5.3"/><path d="M3.8 3.8 L8.2 8.2 M8.2 3.8 L3.8 8.2"/></svg>
<div class="t st" style="left:263.5px">0</div>
<svg style="left:274px;top:1008px" width="12" height="12" viewBox="0 0 12 12" fill="none" stroke="#ffffff" stroke-width="1" stroke-linejoin="round"><path d="M6 1 L11.4 10.8 H0.6 Z M6 4.4 V7.6 M6 8.6 V9.6"/></svg>
<div class="t st" style="left:289.5px">0</div>
<svg style="left:315px;top:1008.5px" width="9" height="11" viewBox="0 0 9 11"><path d="M0.8 0.8 L8 5.5 L0.8 10.2 Z" fill="none" stroke="#ffffff" stroke-width="1" stroke-linejoin="round"/></svg>
<div class="t st" style="transform:scaleX(1.0134);transform-origin:0 0;margin-left:0.81px;left:329.5px">(gdb) Attach (myadd)</div>
<div class="t st" style="transform:scaleX(0.9519);transform-origin:0 0;margin-left:0.30px;left:460px">NORMAL</div>
<div class="t st" style="transform:scaleX(0.9672);transform-origin:0 0;margin-left:-0.48px;left:1484.5px">Ln 12, Col 5</div>
<div class="t st" style="transform:scaleX(0.9222);transform-origin:0 0;margin-left:0.00px;left:1563px">Spaces: 4</div>
<div class="t st" style="transform:scaleX(0.9235);transform-origin:0 0;margin-left:0.00px;left:1629px">UTF-8</div>
<div class="t st" style="transform:scaleX(0.8857);transform-origin:0 0;margin-left:0.00px;left:1677px">LF</div>
<div class="t st" style="transform:scaleX(0.9000);transform-origin:0 0;margin-left:0.55px;left:1705.5px">C++</div>
<div class="t st" style="transform:scaleX(1.0357);transform-origin:0 0;margin-left:-0.52px;left:1742.5px">Linux</div>
<svg style="left:1788px;top:1007px" width="13" height="13" viewBox="0 0 13 13" fill="none" stroke="#ffffff" stroke-width="1"><circle cx="6.5" cy="6.5" r="5.8"/><path d="M3.6 7.6 C4.6 10 8.4 10 9.4 7.6"/><circle cx="4.5" cy="5" r=".8" fill="#fff" stroke="none"/><circle cx="8.5" cy="5" r=".8" fill="#fff" stroke="none"/></svg>
<svg style="left:1818px;top:1007px" width="13" height="14" viewBox="0 0 13 14" fill="none" stroke="#ffffff" stroke-width="1"><path d="M1 10.6 H12 C10.6 9.4 10.4 8 10.4 5.4 C10.4 2.6 8.8 0.8 6.5 0.8 C4.2 0.8 2.6 2.6 2.6 5.4 C2.6 8 2.4 9.4 1 10.6 Z M5.2 11.2 C5.4 12.8 7.6 12.8 7.8 11.2"/></svg>
<div class="t st" style="left:1834.5px">2</div>

<!-- window edges -->
<div class="abs" style="left:0;top:0;width:1px;height:1026px;background:rgba(30,30,30,.7)"></div>
<div class="abs" style="left:1px;top:0;width:1px;height:1026px;background:rgba(30,30,30,.22)"></div>
<div class="abs" style="left:1855px;top:0;width:1px;height:1026px;background:rgba(30,30,30,.75)"></div>
<div class="abs" style="left:1854px;top:0;width:1px;height:1026px;background:rgba(30,30,30,.3)"></div>
</body>
</html>
